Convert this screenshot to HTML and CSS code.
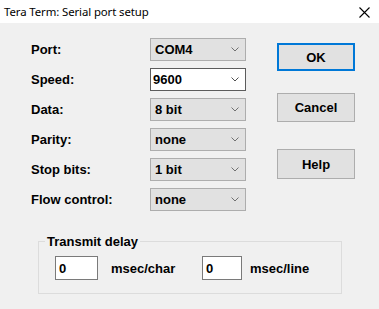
FILE: index.html
```html
<!DOCTYPE html>
<html>
<head>
<meta charset="utf-8">
<link rel="stylesheet" href="styles.css">
</head>
<body>
<div class="window">
  <div class="titlebar">
    <span class="title">Tera Term: Serial port setup</span>
    <svg class="close" width="11" height="11" viewBox="0 0 11 11"><path d="M0.5 0.5L10.5 10.5M10.5 0.5L0.5 10.5" stroke="#000" stroke-width="1.1" fill="none"/></svg>
  </div>
  <div class="content">
    <div class="main">
      <div class="fields">
        <label class="lbl">Port:</label>
        <div class="combo"><span>COM4</span><svg class="chev" width="8" height="5" viewBox="0 0 8 5"><path d="M0.5 0.5L4 4L7.5 0.5" stroke="#707070" fill="none"/></svg></div>
        <label class="lbl">Speed:</label>
        <div class="combo edit"><span>9600</span><svg class="chev" width="8" height="5" viewBox="0 0 8 5"><path d="M0.5 0.5L4 4L7.5 0.5" stroke="#505050" fill="none"/></svg></div>
        <label class="lbl">Data:</label>
        <div class="combo"><span>8 bit</span><svg class="chev" width="8" height="5" viewBox="0 0 8 5"><path d="M0.5 0.5L4 4L7.5 0.5" stroke="#707070" fill="none"/></svg></div>
        <label class="lbl">Parity:</label>
        <div class="combo"><span>none</span><svg class="chev" width="8" height="5" viewBox="0 0 8 5"><path d="M0.5 0.5L4 4L7.5 0.5" stroke="#707070" fill="none"/></svg></div>
        <label class="lbl">Stop bits:</label>
        <div class="combo"><span>1 bit</span><svg class="chev" width="8" height="5" viewBox="0 0 8 5"><path d="M0.5 0.5L4 4L7.5 0.5" stroke="#707070" fill="none"/></svg></div>
        <label class="lbl">Flow control:</label>
        <div class="combo"><span>none</span><svg class="chev" width="8" height="5" viewBox="0 0 8 5"><path d="M0.5 0.5L4 4L7.5 0.5" stroke="#707070" fill="none"/></svg></div>
      </div>
      <div class="buttons">
        <div class="btn default">OK</div>
        <div class="btn cancel">Cancel</div>
        <div class="btn help">Help</div>
      </div>
    </div>
    <fieldset class="group">
      <legend>Transmit delay</legend>
      <div class="delays">
        <div class="num">0</div><span class="unit">msec/char</span>
        <div class="num num2">0</div><span class="unit">msec/line</span>
      </div>
    </fieldset>
  </div>
</div>
</body>
</html>
```

FILE: styles.css
```css
html, body {
  margin: 0;
  padding: 0;
  background: #f0f0f0;
}
.window {
  width: 379px;
  height: 309px;
  background: #f0f0f0;
  font-family: "Liberation Sans", Arial, sans-serif;
  font-size: 13px;
  font-weight: bold;
  color: #000;
}
.titlebar {
  height: 23px;
  background: #fff;
  display: flex;
  align-items: center;
  justify-content: space-between;
  padding: 0 9px 0 4px;
}
.title {
  font-family: "Noto Sans", "Open Sans", sans-serif;
  font-weight: normal;
  font-size: 11.4px;
  letter-spacing: -0.1px;
  margin-top: -1px;
}
.close {
  display: block;
  margin-top: 1px;
}
.main {
  display: flex;
  padding-left: 31px;
}
.fields {
  display: grid;
  grid-template-columns: 119px 96px;
  grid-auto-rows: 23px;
  row-gap: 7px;
  margin-top: 15px;
}
.lbl {
  display: flex;
  align-items: center;
  line-height: 15px;
}
.combo {
  box-sizing: border-box;
  height: 23px;
  border: 1px solid #adadad;
  background: #e1e1e1;
  display: flex;
  align-items: center;
  justify-content: space-between;
  padding: 0 6px 0 4px;
}
.combo.edit {
  background: #fff;
  border-color: #5c5c5c;
  padding-left: 2px;
}
.chev {
  display: block;
}
.buttons {
  margin-left: 31px;
  margin-top: 20px;
  display: flex;
  flex-direction: column;
}
.btn {
  box-sizing: border-box;
  width: 78px;
  height: 29px;
  border: 1px solid #adadad;
  background: #e1e1e1;
  display: flex;
  align-items: center;
  justify-content: center;
}
.btn.default {
  border: 2px solid #0078d7;
  height: 28px;
}
.btn.cancel {
  margin-top: 22px;
}
.btn.help {
  margin-top: 27px;
  height: 30px;
}
.group {
  box-sizing: border-box;
  margin: 23px 0 0 38px;
  width: 304px;
  border: 1px solid #dcdcdc;
  padding: 0 6px 13px 6px;
  min-width: 0;
}
.group legend {
  padding: 0 2px;
  line-height: 15px;
}
.delays {
  display: flex;
  align-items: center;
  margin-left: 10px;
  margin-top: 7px;
}
.num {
  box-sizing: border-box;
  flex: none;
  width: 43px;
  height: 24px;
  background: #fff;
  border: 1px solid #7a7a7a;
  padding-left: 3px;
  display: flex;
  align-items: center;
}
.num2 {
  width: 40px;
}
.unit {
  flex: none;
  width: 104px;
  padding-left: 13px;
  box-sizing: border-box;
}
.unit:last-child {
  width: auto;
  padding-left: 8px;
}
```
